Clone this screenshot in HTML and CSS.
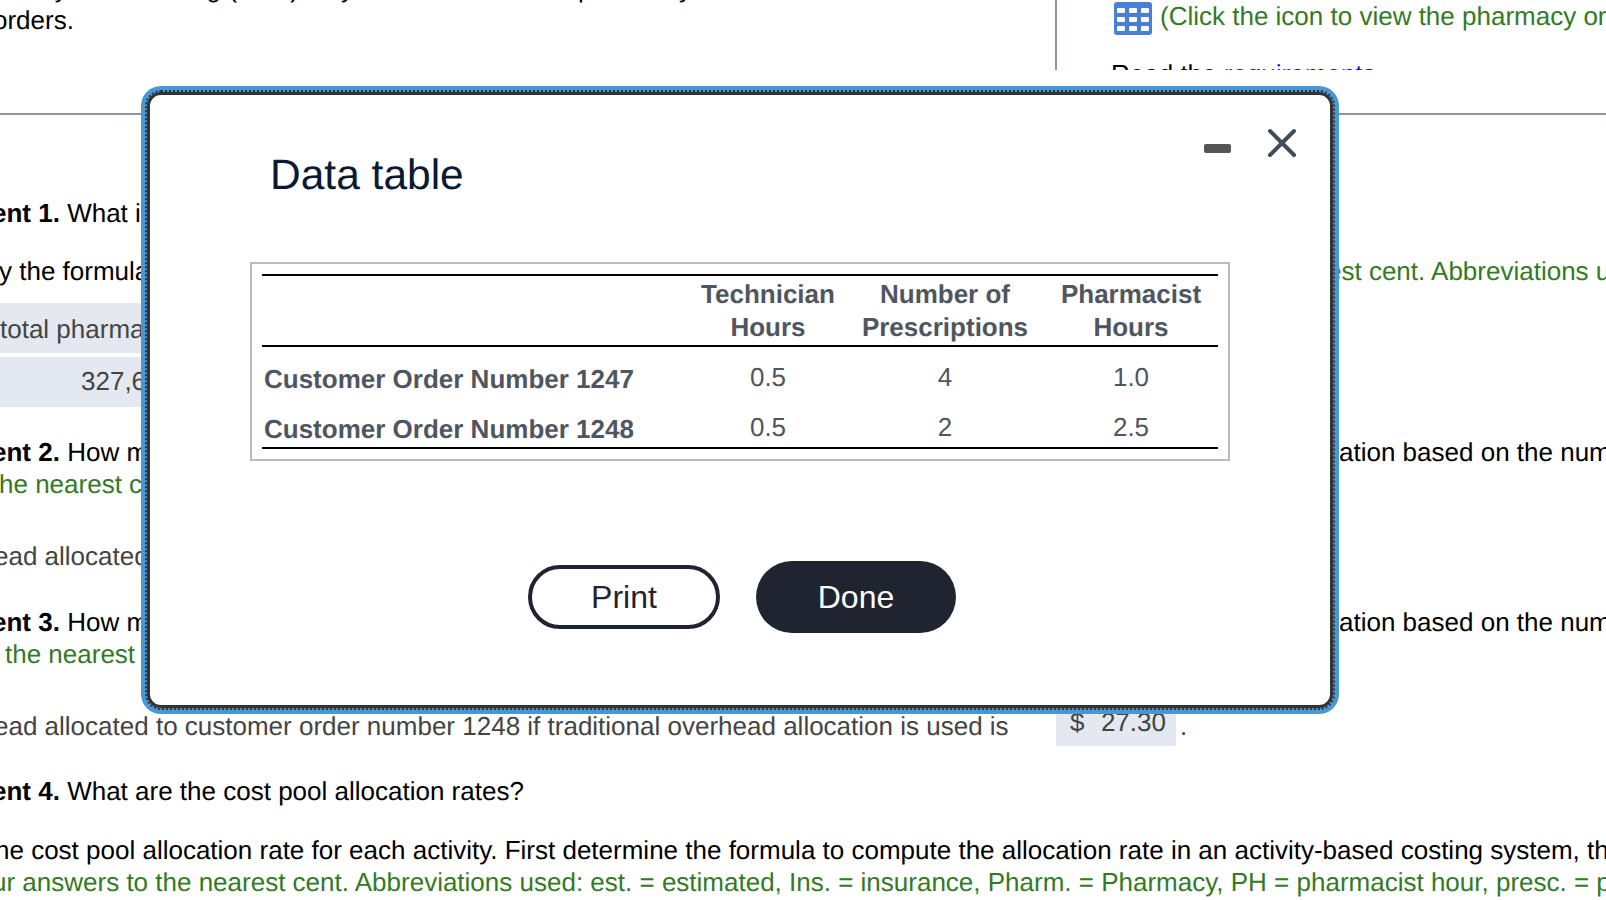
FILE: index.html
```html
<!DOCTYPE html>
<html lang="en">
<head>
    <meta charset="UTF-8">
    <title>Data table</title>
    <link rel="stylesheet" href="styles.css">
</head>
<body>

<!-- page behind the dialog -->
<div class="top-pane">
    <div class="top-left">
        <div class="cut-line">Kay adds costing (ABC) only to the last order of pharmacy</div>
        <div class="orders">orders.</div>
    </div>
    <div class="top-right">
        <div class="icon-row">
            <svg class="table-icon" viewBox="0 0 38 33">
                <rect width="38" height="33" rx="3" fill="#4a7fd6"/>
                <g fill="#fff">
                    <rect x="3" y="6" width="8" height="5" rx="1"/>
                    <rect x="15" y="6" width="8" height="5" rx="1"/>
                    <rect x="27" y="6" width="8" height="5" rx="1"/>
                    <rect x="3" y="15" width="8" height="5" rx="1"/>
                    <rect x="15" y="15" width="8" height="5" rx="1"/>
                    <rect x="27" y="15" width="8" height="5" rx="1"/>
                    <rect x="3" y="24" width="8" height="5" rx="1"/>
                    <rect x="15" y="24" width="8" height="5" rx="1"/>
                    <rect x="27" y="24" width="8" height="5" rx="1"/>
                </g>
            </svg>
            <span class="green icon-text">(Click the icon to view the pharmacy order data.)</span>
        </div>
        <div class="read-line">Read the <a class="req-link" href="#">requirements</a></div>
    </div>
</div>
<hr class="divider">

<div class="line req-1"><span class="left req"><b>ent 1.</b> What is</span></div>
<div class="line formula"><span class="left">y the formula</span><span class="right est green">est cent. Abbreviations used: est. = estimated</span></div>
<div class="answer-box total">total pharmacy</div>
<div class="answer-box amount">327,600</div>
<div class="line req-2"><span class="left req"><b>ent 2.</b> How much</span><span class="right">ation based on the number of</span></div>
<div class="line green"><span class="left">he nearest cent.</span></div>
<div class="line overhead grey"><span class="left ead">ead allocated</span></div>
<div class="line req-3"><span class="left req"><b>ent 3.</b> How much</span><span class="right">ation based on the number of</span></div>
<div class="line green"><span class="left nudge">the nearest cent.</span></div>
<div class="line answer-row grey">
    <span class="answer-text">ead allocated to customer order number 1248 if traditional overhead allocation is used is</span>
    <span class="answer-value">$&nbsp;&nbsp;27.30</span>
    <span class="dot">.</span>
</div>
<div class="line req-4"><span class="left req"><b>ent 4.</b> What are the cost pool allocation rates?</span></div>
<div class="wide-line first">he cost pool allocation rate for each activity. First determine the formula to compute the allocation rate in an activity-based costing system, then</div>
<div class="wide-line last green">ur answers to the nearest cent. Abbreviations used: est. = estimated, Ins. = insurance, Pharm. = Pharmacy, PH = pharmacist hour, presc. = prescription</div>

<!-- dialog -->
<div class="modal">
    <div class="modal-dots">
        <div class="modal-inner">
            <div class="modal-head">
                <h2 class="modal-title">Data table</h2>
                <div class="modal-tools">
                    <span class="minimize"></span>
                    <svg class="close-icon" viewBox="0 0 30 30">
                        <path d="M3 3 L27 27 M27 3 L3 27" stroke="#414b5a" stroke-width="4" stroke-linecap="round" fill="none"/>
                    </svg>
                </div>
            </div>
            <div class="table-frame">
                <table class="data-table">
                    <colgroup>
                        <col class="col-name">
                        <col class="col-tech">
                        <col class="col-presc">
                        <col class="col-pharm">
                    </colgroup>
                    <thead>
                        <tr>
                            <th></th>
                            <th>Technician<br>Hours</th>
                            <th>Number of<br>Prescriptions</th>
                            <th>Pharmacist<br>Hours</th>
                        </tr>
                    </thead>
                    <tbody>
                        <tr>
                            <td class="row-name">Customer Order Number 1247</td>
                            <td>0.5</td>
                            <td>4</td>
                            <td>1.0</td>
                        </tr>
                        <tr>
                            <td class="row-name">Customer Order Number 1248</td>
                            <td>0.5</td>
                            <td>2</td>
                            <td>2.5</td>
                        </tr>
                    </tbody>
                </table>
            </div>
            <div class="modal-buttons">
                <button class="btn btn-print">Print</button>
                <button class="btn btn-done">Done</button>
            </div>
        </div>
    </div>
</div>

</body>
</html>
```

FILE: styles.css
```css
/* page */
html, body {
    height: 900px;
    overflow: hidden;
}

body {
    margin: 0;
    position: relative;
    font-family: 'Liberation Sans', Arial, sans-serif;
    font-size: 26px;
    line-height: 32px;
    color: #000;
    background: #fff;
    text-rendering: geometricPrecision;
}

.green {
    color: #337a25;
}

.grey {
    color: #444;
}

/* top part */
.top-pane {
    display: flex;
    height: 70px;
    overflow: hidden;
}

.top-left {
    width: 1062px;
    border-right: 2px solid #8a93a8;
    margin-left: -7px;
    flex-shrink: 0;
}

.cut-line {
    margin: -28px 0 0 30px;
    white-space: nowrap;
}

.orders {
    white-space: nowrap;
}

.top-right {
    padding-left: 54px;
    white-space: nowrap;
}

.icon-row {
    display: flex;
    align-items: center;
    gap: 8px;
    margin: 2px 0 0 3px;
}

.icon-text {
    margin-top: -6px;
}

.table-icon {
    width: 38px;
    height: 33px;
    flex-shrink: 0;
}

.read-line {
    margin-top: 23px;
}

.req-link {
    color: #00f;
    text-decoration: none;
}

.divider {
    margin: 43px 0 0;
    border: none;
    height: 2px;
    background: #8a93a8;
}

/* text rows */
.line {
    display: grid;
    grid-template-columns: 1339px 1fr;
    white-space: nowrap;
    overflow: hidden;
}

.left {
    margin-left: -1px;
}

.left.req {
    margin-left: -8px;
}

.left.ead {
    margin-left: -6px;
}

.left.nudge {
    margin-left: 5px;
}

.right {
    color: #000;
}

.est {
    margin-left: -12px;
    color: #337a25;
}

.req-1 {
    margin-top: 82px;
}

.formula {
    margin-top: 26px;
}

.answer-box {
    width: 190px;
    height: 50px;
    line-height: 52px;
    background: #e4e8f1;
    color: #444;
    white-space: nowrap;
    overflow: hidden;
}

.total {
    margin-top: 16px;
}

.amount {
    margin-top: 4px;
    padding-left: 81px;
    box-sizing: border-box;
    line-height: 48px;
}

.req-2 {
    margin-top: 29px;
}

.overhead {
    margin-top: 40px;
}

.req-3 {
    margin-top: 34px;
}

.answer-row {
    display: flex;
    margin-top: 40px;
    overflow: visible;
}

.answer-text {
    width: 1057px;
    margin-left: -6px;
    flex-shrink: 0;
    margin-right: 5px;
}

.answer-value {
    width: 106px;
    height: 50px;
    margin: -14px 0 -4px;
    padding-left: 14px;
    line-height: 52px;
    word-spacing: 1px;
    background: #e4e8f1;
    flex-shrink: 0;
}

.dot {
    margin-left: 4px;
}

.req-4 {
    margin-top: 33px;
}

.wide-line {
    margin-left: -5px;
    white-space: nowrap;
}

.wide-line.last {
    margin-left: -8px;
}

.first {
    margin-top: 27px;
}

/* dialog */
.modal {
    position: absolute;
    left: 141px;
    top: 86px;
    width: 1198px;
    height: 628px;
    box-sizing: border-box;
    padding: 4px;
    background: #4a98d3;
    border-radius: 20px;
}

.modal-dots {
    height: 100%;
    box-sizing: border-box;
    border: 2px dotted #333;
    border-radius: 16px;
}

.modal-inner {
    height: 100%;
    box-sizing: border-box;
    border: 3px solid #333;
    border-radius: 14px;
    background: #fff;
}

.modal-head {
    display: flex;
    justify-content: space-between;
    padding: 57px 33px 0 120px;
    height: 167px;
    box-sizing: border-box;
}

.modal-title {
    margin: 0;
    font-size: 42.5px;
    line-height: 48px;
    font-weight: normal;
    color: #0b1a33;
}

.modal-tools {
    display: flex;
    align-items: flex-start;
    gap: 36px;
    margin-top: -24px;
}

.minimize {
    width: 27px;
    height: 9px;
    margin-top: 16px;
    background: #555;
    border-radius: 2px;
}

.close-icon {
    width: 30px;
    height: 30px;
}

/* table */
.table-frame {
    width: 980px;
    height: 199px;
    box-sizing: border-box;
    margin-left: 100px;
    padding: 10px;
    border: 2px solid #bbb;
}

.data-table {
    width: 956px;
    table-layout: fixed;
    border-collapse: collapse;
    border-top: 2px solid #000;
    border-bottom: 2px solid #000;
    color: #50565f;
}

.col-name {
    width: 428px;
}

.col-tech {
    width: 156px;
}

.col-presc {
    width: 198px;
}

.col-pharm {
    width: 174px;
}

.data-table th {
    padding: 2px 0 1px;
    font-weight: bold;
    line-height: 33px;
    white-space: nowrap;
    border-bottom: 2px solid #000;
}

.data-table td {
    height: 51px;
    box-sizing: border-box;
    padding: 14px 0 0;
    vertical-align: top;
    text-align: center;
}

.data-table .row-name {
    padding: 16px 0 0 2px;
    text-align: left;
    font-weight: bold;
    white-space: nowrap;
}

/* buttons */
.modal-buttons {
    display: flex;
    justify-content: center;
    align-items: center;
    gap: 36px;
    margin-top: 100px;
    padding-left: 4px;
}

.btn {
    font-family: inherit;
    font-size: 32px;
    border-radius: 40px;
    cursor: pointer;
}

.btn-print {
    width: 192px;
    height: 64px;
    background: #fff;
    color: #1f2430;
    border: 4px solid #1f2430;
}

.btn-done {
    width: 200px;
    height: 72px;
    background: #1f2430;
    color: #fff;
    border: none;
}
```
